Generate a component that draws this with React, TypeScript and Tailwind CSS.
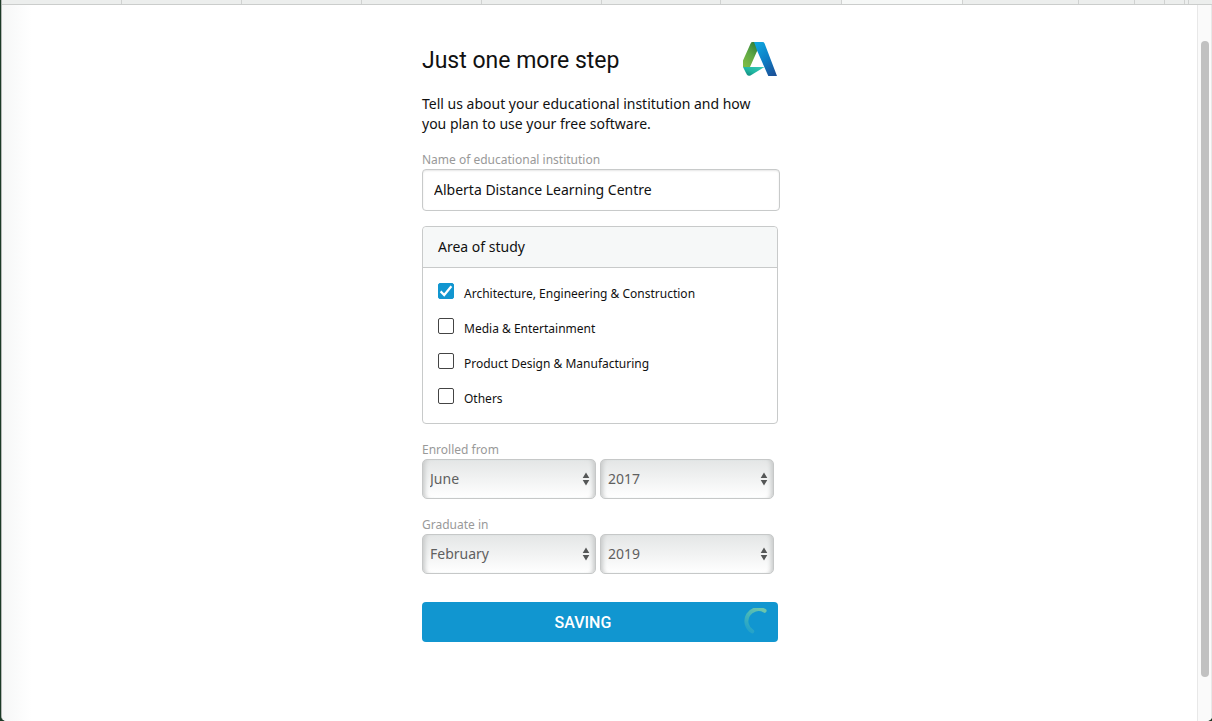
import React, { useState } from "react";

type TabItem = {
    width: number;
    active?: boolean;
};

// bottom edge of the browser tab strip, widths without the divider
const tabs: TabItem[] = [
    { width: 119 },
    { width: 119 },
    { width: 119 },
    { width: 119 },
    { width: 119 },
    { width: 118 },
    { width: 120 },
    { width: 120, active: true },
    { width: 115 },
    { width: 55 },
    { width: 29 },
    { width: 19 },
    { width: 3 },
    { width: 23 },
];

const areas = [
    "Architecture, Engineering & Construction",
    "Media & Entertainment",
    "Product Design & Manufacturing",
    "Others",
];

const months = ["January", "February", "March", "April", "May", "June", "July", "August", "September", "October", "November", "December"];
const years = ["2015", "2016", "2017", "2018", "2019", "2020", "2021"];

const Logo = () => (
    <svg width="34" height="34" viewBox="0 0 34 34" role="img" aria-label="Autodesk">
        <defs>
            <linearGradient id="green" x1="0.8" y1="0" x2="0.2" y2="1">
                <stop offset="0" stopColor="#2f7d3a" />
                <stop offset="0.5" stopColor="#5fa844" />
                <stop offset="1" stopColor="#7fbb45" />
            </linearGradient>
            <linearGradient id="blue" x1="0.2" y1="0" x2="0.8" y2="1">
                <stop offset="0" stopColor="#0fa5de" />
                <stop offset="0.5" stopColor="#0d7fc6" />
                <stop offset="1" stopColor="#1b5299" />
            </linearGradient>
            <linearGradient id="teal" x1="0" y1="1" x2="1" y2="0">
                <stop offset="0" stopColor="#0f7f78" />
                <stop offset="0.45" stopColor="#1fb5a0" />
                <stop offset="1" stopColor="#3ccbb8" />
            </linearGradient>
        </defs>
        <path d="M9.5 0H13L15 7L7 25H0V18.5L7.6 1.4Q8.2 0 9.5 0Z" fill="url(#green)" />
        <path d="M11 0H19.5Q21 0 21.6 1.4L34 34H25.3L14 8.5Q12.6 4 11 0Z" fill="url(#blue)" />
        <path d="M0 25H21.5L7.5 33.4Q5.2 34.6 3.8 32.4Z" fill="url(#teal)" />
    </svg>
);

const Spinner = () => (
    <svg width="24" height="28" viewBox="0 0 24 28" fill="none" aria-hidden="true">
        <defs>
            <linearGradient id="spin" x1="0.8" y1="0" x2="0.3" y2="1">
                <stop offset="0" stopColor="#6cc5ab" />
                <stop offset="0.5" stopColor="#44b5b9" />
                <stop offset="1" stopColor="#25a3c8" />
            </linearGradient>
        </defs>
        <path d="M20.6 2.8A11.4 11.4 0 0 0 8.2 23.4" stroke="url(#spin)" strokeWidth="4" strokeLinecap="round" />
    </svg>
);

type SelectProps = {
    label: string;
    id?: string;
    options: string[];
    value: string;
    onChange: (value: string) => void;
};

const SelectBox: React.FC<SelectProps> = ({ label, id, options, value, onChange }) => (
    <div className="relative w-[174px]">
        <select
            id={id}
            aria-label={label}
            value={value}
            onChange={(e) => onChange(e.target.value)}
            className="block h-10 w-full appearance-none rounded-[5px] border border-[#c6c8c8] bg-linear-to-b from-[#e4e6e6] to-white px-[7px] text-sm text-[#5f6060] shadow-[inset_5px_0_4px_-3px_#c8caca,inset_-5px_0_4px_-3px_#c8caca] focus:outline-none"
        >
            {options.map((option) => (
                <option key={option}>{option}</option>
            ))}
        </select>
        <svg className="pointer-events-none absolute top-[13px] right-[6px]" width="8" height="14" viewBox="0 0 8 14" fill="#555757" aria-hidden="true">
            <path d="M4 0.5L7.3 6H0.7ZM4 13.5L0.7 8H7.3Z" />
        </svg>
    </div>
);

const App: React.FC = () => {
    const [institution, setInstitution] = useState("Alberta Distance Learning Centre");
    const [selected, setSelected] = useState<string[]>([areas[0]]);
    const [fromMonth, setFromMonth] = useState("June");
    const [fromYear, setFromYear] = useState("2017");
    const [toMonth, setToMonth] = useState("February");
    const [toYear, setToYear] = useState("2019");

    const toggleArea = (area: string) => {
        if (selected.includes(area)) {
            setSelected(selected.filter((a) => a !== area));
        } else {
            setSelected([...selected, area]);
        }
    };

    return (
        <div className="min-h-screen bg-[#1c3a26] pl-px font-['Noto_Sans',sans-serif] text-[#111]">
            <div className="flex min-h-screen flex-col overflow-hidden rounded-b-[5px] border-l border-[#b5b8b6] bg-white">
                {/* Tab strip */}
                <div className="flex h-[5px] border-b border-[#cbcdcc] bg-[#eceeed]">
                    {tabs.map((tab, i) => (
                        <div
                            key={i}
                            className={`basis-0 border-r border-[#d0d2d1] last:border-r-0 ${tab.active ? "bg-[#f6f8f7]" : ""}`}
                            style={{ flexGrow: tab.width }}
                        />
                    ))}
                </div>

                <div className="flex flex-1">
                    <main className="flex flex-1 justify-center bg-linear-to-r from-[#f6f7f7] to-white to-[30px] pt-[37px] pb-10 pl-px">
                        <form className="w-[356px]" onSubmit={(e) => e.preventDefault()}>
                            <div className="flex items-start justify-between pr-px">
                                <h1 className="font-[Roboto,sans-serif] text-[23px] leading-[38px]">Just one more step</h1>
                                <Logo />
                            </div>

                            <p className="mt-[14px] text-sm leading-5">
                                Tell us about your educational institution and how you plan to use your free software.
                            </p>

                            <label htmlFor="institution" className="mt-[18px] block text-xs leading-4 text-[#999]">
                                Name of educational institution
                            </label>
                            <input
                                id="institution"
                                type="text"
                                value={institution}
                                onChange={(e) => setInstitution(e.target.value)}
                                className="mt-px block h-[42px] w-[358px] rounded border border-[#c8caca] bg-white px-[11px] pb-0.5 text-sm shadow-[inset_0_1px_2px_#e6e6e6] focus:outline-none"
                            />

                            {/* Area of study */}
                            <div role="group" aria-labelledby="area-title" className="mt-[15px] rounded border border-[#c8caca]">
                                <h2 id="area-title" className="rounded-t border-b border-[#c8caca] bg-[#f6f8f8] px-[15px] text-sm leading-10">
                                    Area of study
                                </h2>
                                <div className="flex flex-col gap-[15px] p-[15px]">
                                    {areas.map((area) => (
                                        <label key={area} className="flex h-5 items-start gap-[10px] text-xs">
                                            <span className="grid size-4">
                                                <input
                                                    type="checkbox"
                                                    checked={selected.includes(area)}
                                                    onChange={() => toggleArea(area)}
                                                    className="peer size-4 appearance-none rounded-[2px] border border-[#444] bg-white [grid-area:1/1] checked:border-[#1196d0] checked:bg-[#1196d0]"
                                                />
                                                <svg className="pointer-events-none hidden size-4 [grid-area:1/1] peer-checked:block" viewBox="0 0 16 16" fill="none" aria-hidden="true">
                                                    <path d="M2.6 8.4L6.2 12L13.4 3.2" stroke="white" strokeWidth="2.2" />
                                                </svg>
                                            </span>
                                            <span className="pt-[3px] leading-4">{area}</span>
                                        </label>
                                    ))}
                                </div>
                            </div>

                            <label htmlFor="from-month" className="mt-[18px] block text-xs leading-4 text-[#999]">
                                Enrolled from
                            </label>
                            <div className="mt-px flex gap-1">
                                <SelectBox id="from-month" label="Enrolled from month" options={months} value={fromMonth} onChange={setFromMonth} />
                                <SelectBox label="Enrolled from year" options={years} value={fromYear} onChange={setFromYear} />
                            </div>

                            <label htmlFor="to-month" className="mt-[18px] block text-xs leading-4 text-[#999]">
                                Graduate in
                            </label>
                            <div className="mt-px flex gap-1">
                                <SelectBox id="to-month" label="Graduate in month" options={months} value={toMonth} onChange={setToMonth} />
                                <SelectBox label="Graduate in year" options={years} value={toYear} onChange={setToYear} />
                            </div>

                            <button type="submit" className="mt-7 flex h-10 w-full items-center rounded bg-[#1196d0] pr-[10px] font-[Roboto,sans-serif] text-base font-medium text-white">
                                <span className="flex-1 pt-0.5">SAVING</span>
                                <Spinner />
                            </button>
                        </form>
                    </main>

                    {/* Scrollbar */}
                    <div className="flex w-[15px] flex-col items-center border-x border-[#e8e8e8] bg-[#fafafa] pt-9 pb-11">
                        <div className="w-2 flex-1 rounded-full bg-[#c1c1c1]" />
                    </div>
                </div>
            </div>
        </div>
    );
};

export default App;
